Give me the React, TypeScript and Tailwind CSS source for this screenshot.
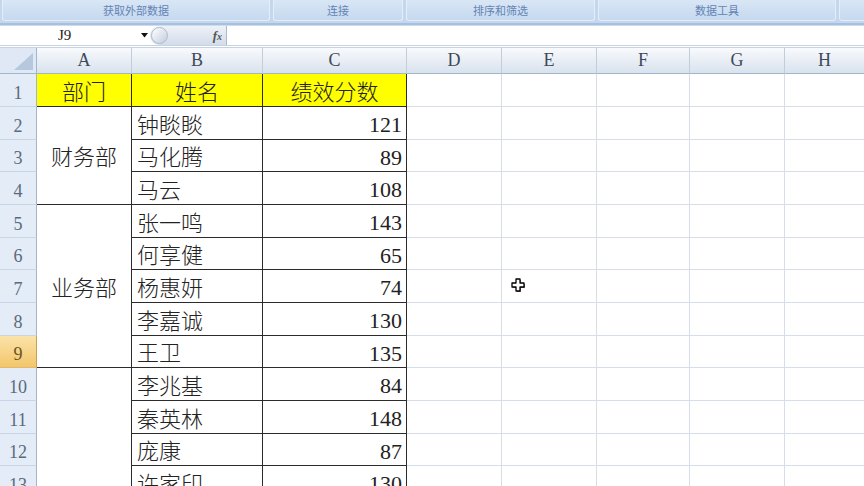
import React from 'react';

const cjk = '"Noto Sans CJK SC", "Liberation Sans", sans-serif';
const serif = '"Liberation Serif", serif';

interface Row {
  n: number;
  dept?: string;
  span?: number;
  name: string;
  score: number;
}

const rows: Row[] = [
  { n: 2, dept: '财务部', span: 3, name: '钟睒睒', score: 121 },
  { n: 3, name: '马化腾', score: 89 },
  { n: 4, name: '马云', score: 108 },
  { n: 5, dept: '业务部', span: 5, name: '张一鸣', score: 143 },
  { n: 6, name: '何享健', score: 65 },
  { n: 7, name: '杨惠妍', score: 74 },
  { n: 8, name: '李嘉诚', score: 130 },
  { n: 9, name: '王卫', score: 135 },
  { n: 10, dept: '', span: 4, name: '李兆基', score: 84 },
  { n: 11, name: '秦英林', score: 148 },
  { n: 12, name: '庞康', score: 87 },
  { n: 13, name: '许家印', score: 130 },
];

const groups = [
  { label: '获取外部数据', w: 'w-[268px]' },
  { label: '连接', w: 'w-[130px]' },
  { label: '排序和筛选', w: 'w-[189px]' },
  { label: '数据工具', w: 'w-[238px]' },
  { label: '', w: 'w-[40px]' },
];

const cols = ['A', 'B', 'C', 'D', 'E', 'F', 'G', 'H'];

const RowHead: React.FC<{ n: number }> = ({ n }) => (
  <div
    className={
      n === 9
        ? 'flex items-center justify-center border-r border-b border-r-[#c8a052] border-b-[#e0b870] bg-gradient-to-b from-[#fbe3a8] to-[#f3c66a] text-[18px] text-[#6b5326]'
        : 'flex items-center justify-center border-r border-b border-r-[#9eb6ce] border-b-[#c9d6e6] bg-[#e4ecf7] text-[18px] text-[#5b6a7c]'
    }
    style={{ fontFamily: serif }}
  >
    <span className="pt-[6px]">{n}</span>
  </div>
);

// empty cells D..H of one row
const Blank: React.FC = () => (
  <>
    <div className="border-r border-b border-[#d6dde8]" />
    <div className="border-r border-b border-[#d6dde8]" />
    <div className="border-r border-b border-[#d6dde8]" />
    <div className="border-r border-b border-[#d6dde8]" />
    <div className="border-b border-[#d6dde8]" />
  </>
);

export default function App() {
  return (
    <div className="relative w-[864px] h-[486px] overflow-hidden bg-white flex flex-col">
      {/* ribbon group labels */}
      <div className="h-[23px] flex gap-[3px] bg-[#c3d7ef] px-[2px] shrink-0">
        {groups.map((g, i) => (
          <div
            key={i}
            className={`${g.w} shrink-0 h-[21px] flex items-center justify-center rounded-b-[3px] border border-t-0 border-[#e4edf8] bg-gradient-to-b from-[#d9e6f5] to-[#c6d9ef] text-[11px] text-[#6384b4]`}
            style={{ fontFamily: cjk }}
          >
            {g.label}
          </div>
        ))}
      </div>
      <div className="h-[3px] bg-[#a7c0df] border-b border-[#cfdcec] shrink-0" />

      {/* formula bar */}
      <div className="h-[19px] flex items-center bg-white shrink-0">
        <div className="w-[150px] h-full flex items-center relative">
          <span className="pl-[58px] text-[15px] text-[#222]" style={{ fontFamily: serif }}>
            J9
          </span>
          <svg className="absolute left-[141px] top-[7px]" width="7" height="5" viewBox="0 0 7 5">
            <path d="M0 0 H7 L3.5 4.5 Z" fill="#111" />
          </svg>
        </div>
        <div className="relative w-[77px] h-full flex items-center justify-end rounded-l-full border-r border-[#aab8cc] bg-gradient-to-b from-[#eef2f8] to-[#d3dcea] pr-[4px]">
          <div className="absolute left-[1px] top-[1px] w-[17px] h-[17px] rounded-full border border-[#aebbd0] bg-gradient-to-br from-[#ffffff] to-[#c3cede]" />
          <span className="italic text-[13px] text-[#555] font-bold" style={{ fontFamily: serif }}>
            f<span className="text-[10px]">x</span>
          </span>
        </div>
        <div className="flex-1 h-full bg-white" />
      </div>
      <div className="h-[3px] border-y border-[#c6d2e2] bg-white shrink-0" />

      {/* sheet grid */}
      <div
        className="grid grid-cols-[37px_95px_131px_144px_95px_95px_93px_95px_1fr] grid-rows-[26px_33px_33px_32px_33px_33px_32px_33px_33px_32px_33px_33px_32px_33px] shrink-0 font-light"
        style={{ fontFamily: cjk }}
      >
        {/* column headers */}
        <div className="relative border-r border-b border-r-[#9eb6ce] border-b-[#9eb6ce] bg-[#dfe8f4]">
          <svg className="absolute right-[3px] bottom-[3px]" width="19" height="17" viewBox="0 0 19 17">
            <path d="M19 0 V17 H0 Z" fill="#b7c8de" />
          </svg>
        </div>
        {cols.map((c, i) => (
          <div
            key={c}
            className={`flex items-center justify-center border-b border-b-[#9eb6ce] ${i < 7 ? 'border-r border-r-[#c3ccd9]' : ''} bg-gradient-to-b from-[#f8fafd] to-[#d9e2ed] text-[18px] font-normal text-[#3f4a5a]`}
            style={{ fontFamily: serif }}
          >
            {c}
          </div>
        ))}

        {/* row 1 */}
        <RowHead n={1} />
        <div className="flex items-center justify-center bg-[#ffff00] border-r border-b border-[#2b2b2b] text-[22px] text-[#222]">部门</div>
        <div className="flex items-center justify-center bg-[#ffff00] border-r border-b border-[#2b2b2b] text-[22px] text-[#222]">姓名</div>
        <div className="flex items-center justify-center bg-[#ffff00] border-r border-b border-[#2b2b2b] text-[22px] text-[#222]">绩效分数</div>
        <Blank />

        {rows.map((r) => (
          <React.Fragment key={r.n}>
            <RowHead n={r.n} />
            {r.dept !== undefined && (
              <div
                className={`flex items-center justify-center border-r border-b border-[#2b2b2b] text-[22px] text-[#222] ${
                  r.span === 3 ? 'row-span-3' : r.span === 5 ? 'row-span-5' : 'row-span-4'
                }`}
              >
                {r.dept}
              </div>
            )}
            <div className="flex items-center pl-[5px] border-r border-b border-[#2b2b2b] text-[22px] text-[#222]">
              {r.name}
            </div>
            <div
              className="flex items-center justify-end pr-[4px] pt-[3px] border-r border-b border-[#2b2b2b] text-[22px] font-normal text-[#222]"
              style={{ fontFamily: serif }}
            >
              {r.score}
            </div>
            <Blank />
          </React.Fragment>
        ))}
      </div>

      {/* cell cursor */}
      <svg className="absolute left-[510px] top-[277px]" width="16" height="16" viewBox="0 0 16 16">
        <path d="M6 2 H10 V6 H14 V10 H10 V14 H6 V10 H2 V6 H6 Z" fill="#777" transform="translate(1 1)" />
        <path d="M6 2 H10 V6 H14 V10 H10 V14 H6 V10 H2 V6 H6 Z" fill="#fff" stroke="#000" strokeWidth="1.3" strokeLinejoin="round" />
      </svg>
    </div>
  );
}
